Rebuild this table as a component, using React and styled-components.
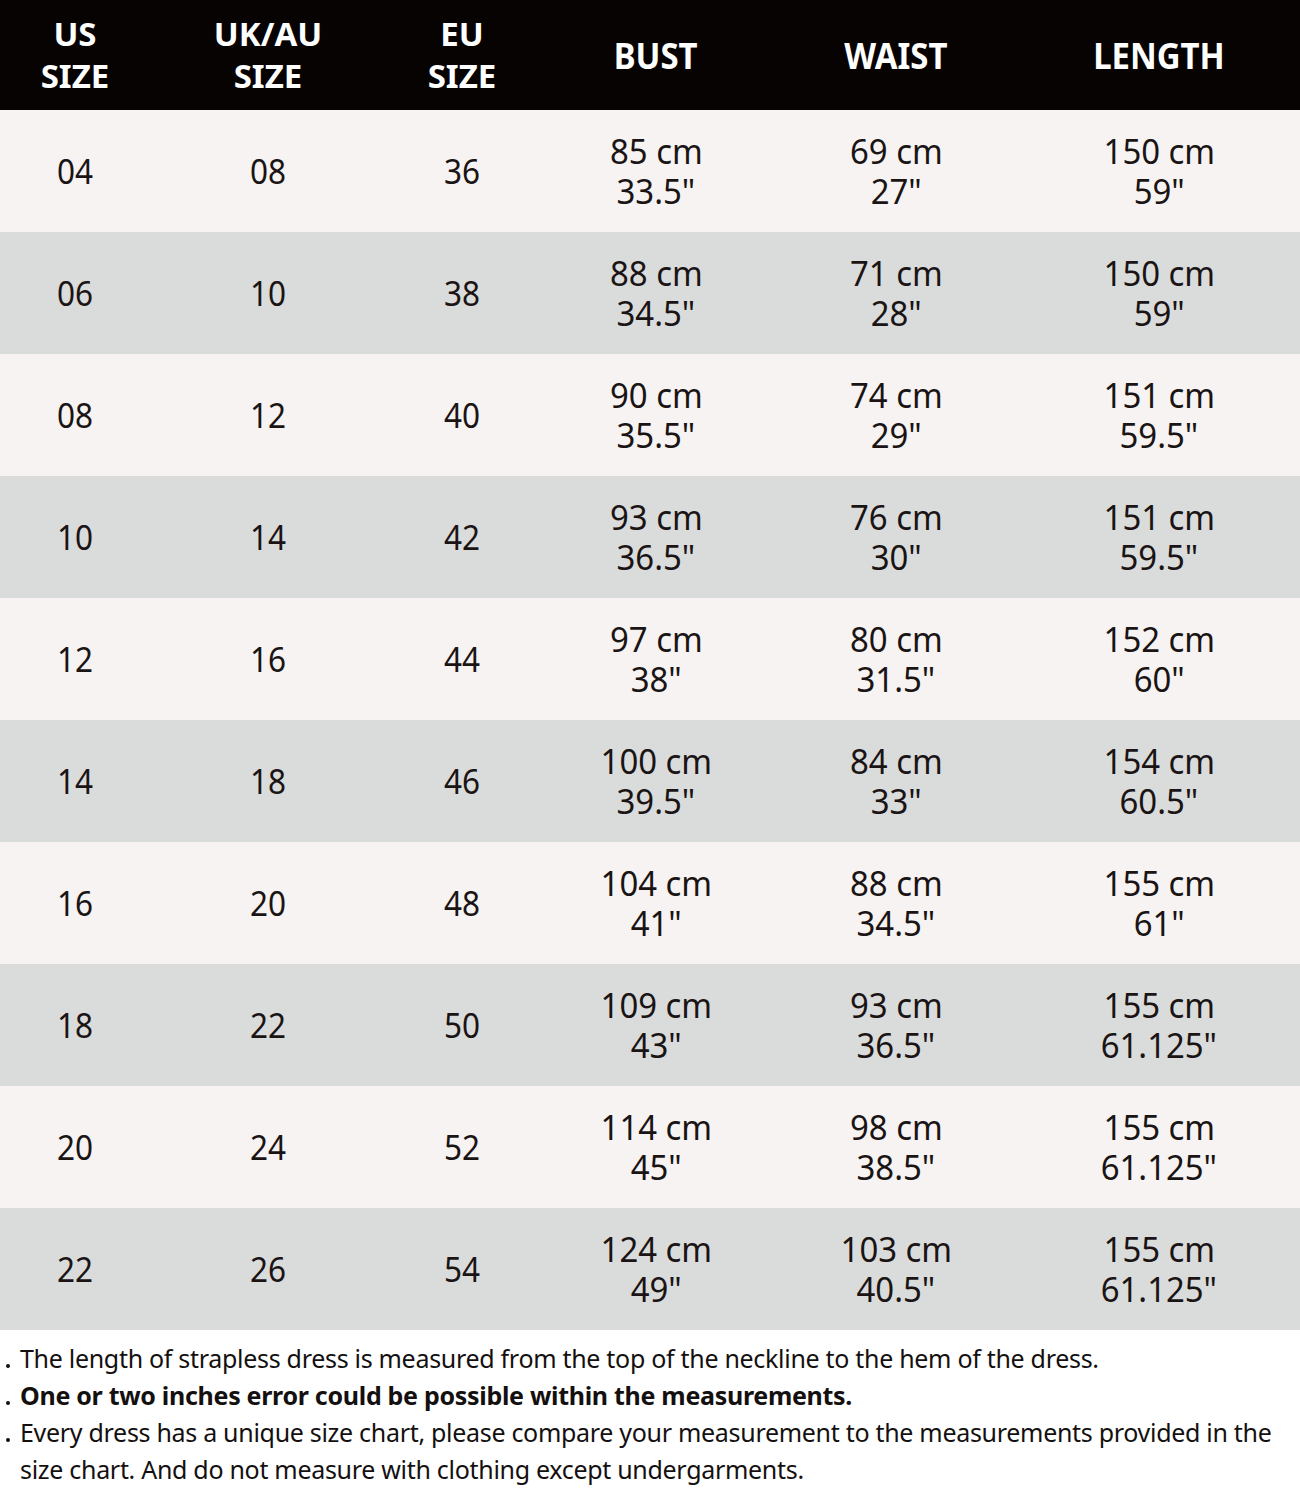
import React from 'react'
import styled, { createGlobalStyle } from 'styled-components'

const GlobalStyle = createGlobalStyle`
  body {
    margin: 0;
    background: #ffffff;
    font-family: "Noto Sans", "Open Sans", sans-serif;
  }
`

const cols = '150px 236px 152px 236px 244px 282px'

const Chart = styled.div`
  width: 1300px;
`

const HeadRow = styled.div`
  display: grid;
  grid-template-columns: ${cols};
  height: 110px;
  background: #070303;
  color: #ffffff;
`

const HeadCell = styled.div`
  display: flex;
  flex-direction: column;
  align-items: center;
  justify-content: center;
  font-weight: 700;
  font-size: ${({ $narrow }) => ($narrow ? '35px' : '33px')};
  line-height: 42px;
  padding-top: ${({ $narrow }) => ($narrow ? '2px' : '0')};
`

const Row = styled.div`
  display: grid;
  grid-template-columns: ${cols};
  height: 122px;
  background: ${({ $shade }) => ($shade ? '#dadcdb' : '#f6f3f2')};
  color: #1a1414;
`

const Cell = styled.div`
  display: flex;
  flex-direction: column;
  align-items: center;
  justify-content: center;
  font-size: 35px;
  line-height: 40px;
`

const Squeeze = styled.span`
  display: inline-block;
  white-space: nowrap;
  transform: scaleX(${({ $x }) => $x});
`

const Notes = styled.ul`
  list-style: none;
  margin: 0;
  padding: 10px 0 0 0;
  color: #141010;
  font-size: 25px;
  line-height: 37px;
`

const Note = styled.li`
  position: relative;
  padding-left: 20px;
  font-weight: ${({ $bold }) => ($bold ? 700 : 400)};
  letter-spacing: -0.3px;

  &::before {
    content: '';
    position: absolute;
    left: 6px;
    top: 24px;
    width: 4px;
    height: 4px;
    border-radius: 50%;
    background: #141010;
  }
`

const rows = [
  ['04', '08', '36', '85 cm', '33.5"', '69 cm', '27"', '150 cm', '59"'],
  ['06', '10', '38', '88 cm', '34.5"', '71 cm', '28"', '150 cm', '59"'],
  ['08', '12', '40', '90 cm', '35.5"', '74 cm', '29"', '151 cm', '59.5"'],
  ['10', '14', '42', '93 cm', '36.5"', '76 cm', '30"', '151 cm', '59.5"'],
  ['12', '16', '44', '97 cm', '38"', '80 cm', '31.5"', '152 cm', '60"'],
  ['14', '18', '46', '100 cm', '39.5"', '84 cm', '33"', '154 cm', '60.5"'],
  ['16', '20', '48', '104 cm', '41"', '88 cm', '34.5"', '155 cm', '61"'],
  ['18', '22', '50', '109 cm', '43"', '93 cm', '36.5"', '155 cm', '61.125"'],
  ['20', '24', '52', '114 cm', '45"', '98 cm', '38.5"', '155 cm', '61.125"'],
  ['22', '26', '54', '124 cm', '49"', '103 cm', '40.5"', '155 cm', '61.125"'],
]

const NX = 0.9
const CX = 0.94

const Measure = ({ cm, inch }) => (
  <Cell>
    <Squeeze $x={CX}>{cm}</Squeeze>
    <Squeeze $x={CX}>{inch}</Squeeze>
  </Cell>
)

export default function App() {
  return (
    <>
      <GlobalStyle />
      <Chart>
        <HeadRow>
          <HeadCell><span>US</span><span>SIZE</span></HeadCell>
          <HeadCell><span>UK/AU</span><span>SIZE</span></HeadCell>
          <HeadCell><span>EU</span><span>SIZE</span></HeadCell>
          <HeadCell $narrow><Squeeze $x={0.94}>BUST</Squeeze></HeadCell>
          <HeadCell $narrow><Squeeze $x={0.94}>WAIST</Squeeze></HeadCell>
          <HeadCell $narrow><Squeeze $x={0.94}>LENGTH</Squeeze></HeadCell>
        </HeadRow>
        {rows.map((r, i) => (
          <Row key={r[0]} $shade={i % 2 === 1}>
            <Cell><Squeeze $x={NX}>{r[0]}</Squeeze></Cell>
            <Cell><Squeeze $x={NX}>{r[1]}</Squeeze></Cell>
            <Cell><Squeeze $x={NX}>{r[2]}</Squeeze></Cell>
            <Measure cm={r[3]} inch={r[4]} />
            <Measure cm={r[5]} inch={r[6]} />
            <Measure cm={r[7]} inch={r[8]} />
          </Row>
        ))}
        <Notes>
          <Note>The length of strapless dress is measured from the top of the neckline to the hem of the dress.</Note>
          <Note $bold>One or two inches error could be possible within the measurements.</Note>
          <Note>Every dress has a unique size chart, please compare your measurement to the measurements provided in the size chart. And do not measure with clothing except undergarments.</Note>
        </Notes>
      </Chart>
    </>
  )
}
